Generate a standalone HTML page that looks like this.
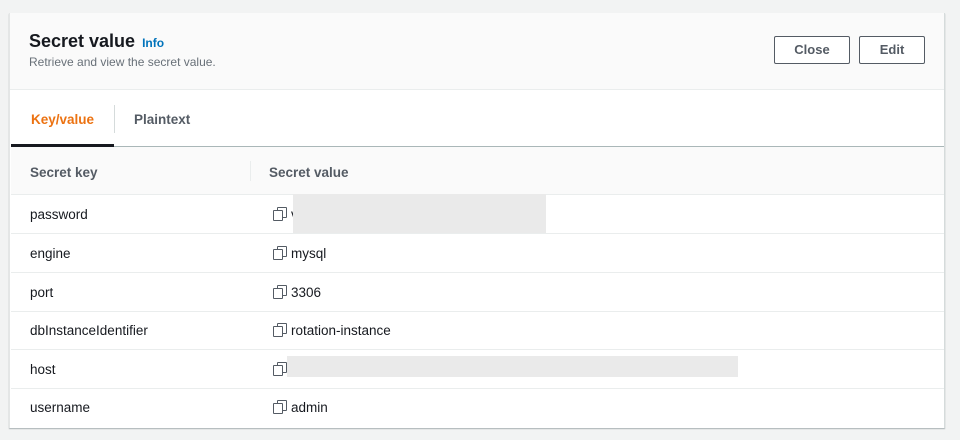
<!DOCTYPE html>
<html><head><style>
*{margin:0;padding:0;box-sizing:border-box}
body{width:960px;height:440px;background:#f2f3f3;font-family:"Liberation Sans",sans-serif;position:relative;overflow:hidden;color:#16191f}
.panel{position:absolute;left:9px;top:13px;width:936px;height:415px;background:#fff;border-left:1px solid #e4e6e6;border-right:1px solid #d5dbdb;box-shadow:0 1px 1px rgba(0,28,36,.3)}
.hdr{position:absolute;left:0;top:0;width:934px;height:77px;background:#fafafa;border-bottom:1px solid #eaeded}
.title{position:absolute;left:19px;top:18px;font-size:18px;font-weight:bold}
.info{font-size:12px;color:#0073bb;font-weight:bold;margin-left:2px}
.sub{position:absolute;left:19px;top:42px;font-size:12px;color:#687078}
.btn{position:absolute;top:23px;height:28px;border:1px solid #545b64;border-radius:2px;background:#fff;font-size:13px;font-weight:bold;color:#545b64;text-align:center;line-height:26px}
.tab{position:absolute;top:99px;font-size:13.5px;font-weight:bold}
.line{position:absolute;left:1px;top:133px;width:933px;height:1px;background:#aab7b8}
.ul{position:absolute;left:1px;top:131px;width:103px;height:3px;background:#16191f}
.sep{position:absolute;left:104px;top:92px;width:1px;height:28px;background:#d5dbdb}
.th{position:absolute;left:1px;top:134px;width:933px;height:48px;background:#fafafa;border-bottom:1px solid #eaeded}
.th span{position:absolute;top:18px;font-size:13.5px;font-weight:bold;color:#545b64}
.row{position:absolute;left:1px;width:933px;height:39px;border-bottom:1px solid #eaeded;font-size:13.5px}
.row .k{position:absolute;left:19px;top:12px}
.row .v{position:absolute;left:262px;top:12px}
.cp{display:inline-block;position:relative;width:13px;height:13px;vertical-align:-1px;margin-right:5px}
.cp:before{content:"";position:absolute;left:4px;top:0;width:8px;height:9px;border:1.5px solid #545b64;border-radius:1px}
.cp:after{content:"";position:absolute;left:0;top:3px;width:8px;height:9px;border:1.5px solid #545b64;border-radius:1px;background:#fff}
.red{position:absolute;background:#eaeaea}
</style></head><body>
<div class="panel">
<div class="hdr">
<div class="title">Secret value <span class="info">Info</span></div>
<div class="sub">Retrieve and view the secret value.</div>
<div class="btn" style="left:764px;width:76px">Close</div>
<div class="btn" style="left:849px;width:66px">Edit</div>
</div>
<div class="tab" style="left:21px;color:#ec7211">Key/value</div>
<div class="sep"></div>
<div class="tab" style="left:124px;color:#545b64">Plaintext</div>
<div class="line"></div><div class="ul"></div>
<div class="th"><span style="left:19px">Secret key</span><div style="position:absolute;left:239px;top:14px;width:1px;height:20px;background:#eaeded"></div><span style="left:258px">Secret value</span></div>
<div class="row" style="top:182px"><span class="k">password</span><span class="v"><i class="cp"></i>v</span></div>
<div class="row" style="top:221px"><span class="k">engine</span><span class="v"><i class="cp"></i>mysql</span></div>
<div class="row" style="top:260px"><span class="k">port</span><span class="v"><i class="cp"></i>3306</span></div>
<div class="row" style="top:298px"><span class="k">dbInstanceIdentifier</span><span class="v"><i class="cp"></i>rotation-instance</span></div>
<div class="row" style="top:337px"><span class="k">host</span><span class="v"><i class="cp"></i></span></div>
<div class="row" style="top:375px;border-bottom:none"><span class="k">username</span><span class="v"><i class="cp"></i>admin</span></div>
</div>
<div class="red" style="left:293px;top:194px;width:253px;height:39px"></div>
<div class="red" style="left:287px;top:356px;width:451px;height:21px"></div>
</body></html>
